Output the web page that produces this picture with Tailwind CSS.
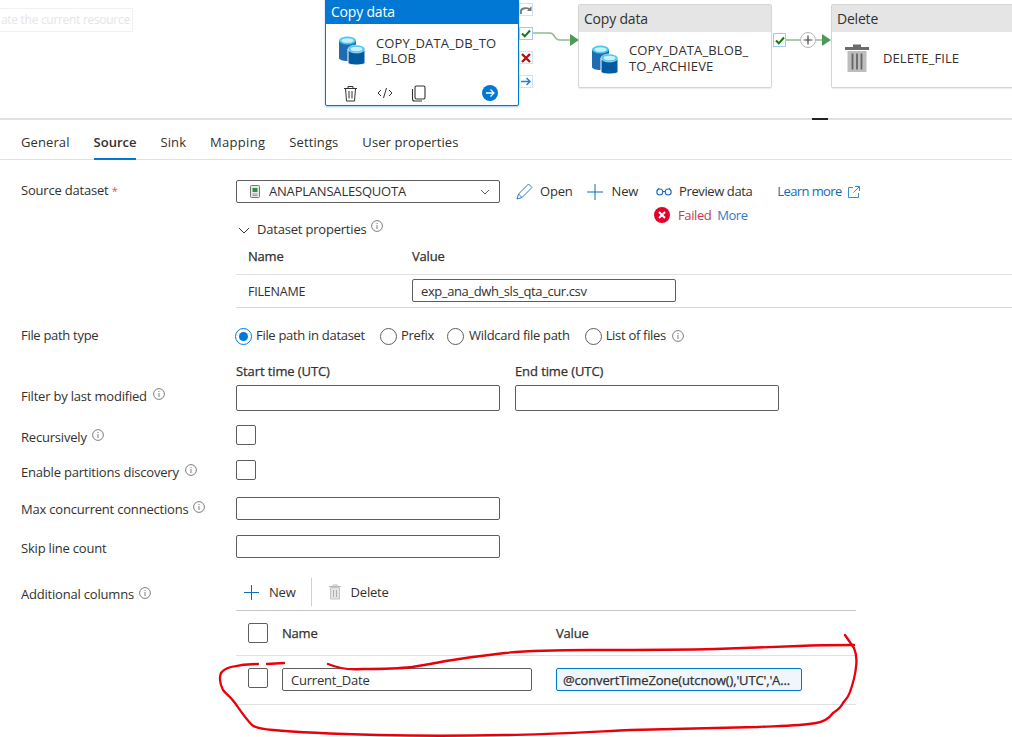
<!DOCTYPE html>
<html lang="en">
<head>
    <meta charset="UTF-8">
    <title>Copy data source</title>
    <script src="https://cdn.jsdelivr.net/npm/@tailwindcss/browser@4"></script>
</head>
<body class="bg-white font-['Open_Sans',sans-serif] text-[13px] tracking-[-0.2px] text-[#323130] overflow-hidden">

<div class="relative w-[1012px] h-[737px] overflow-hidden">

    <!-- Pipeline canvas -->
    <div class="relative h-[120px] border-b-2 border-[#e1e1e1]">
        <div class="absolute left-[-4px] top-[8px] w-[137px] h-[24px] border border-[#f2f2f2] pl-[4px] leading-[22px] text-[12px] tracking-[-0.3px] text-[#e6e6e6] whitespace-nowrap">ate the current resource</div>

        <!-- Links -->
        <svg class="absolute left-0 top-0" width="1012" height="118" fill="none">
            <path d="M533 33H550C556 33 553 40 560 40H571" stroke="#8dbd92" stroke-width="1.5"/>
            <path d="M570 34L579 40L570 46Z" fill="#4b9a57"/>
            <path d="M786 40H800M816 40H823" stroke="#8dbd92" stroke-width="1.5"/>
            <path d="M822 34L831 40L822 46Z" fill="#4b9a57"/>
            <circle cx="808" cy="40" r="7.5" fill="#fff" stroke="#b5b5b5"/>
            <path d="M803.500 40H812.500M808 35.500V44.500" stroke="#444" stroke-width="1.200"/>
        </svg>

        <!-- Node 1 -->
        <div class="absolute left-[325px] top-[-1px] w-[194px] h-[107px] bg-white border border-[#0078d4] rounded-b-[2px] shadow-[0_1px_2px_rgba(0,120,212,0.4)]">
            <div class="h-[24px] bg-[#0078d4] text-white text-[14px] leading-[23px] pl-[5px]">Copy data</div>
            <div class="flex mt-[12px] ml-[13px]">
                <svg width="26" height="29" viewBox="0 0 26 29">
                    <path d="M0 5V22C0 24 4 25 8 25S17 24 17 22V5Z" fill="#1e6db3"/>
                    <ellipse cx="8.500" cy="4.500" rx="8.500" ry="4" fill="#50c8ea"/>
                    <ellipse cx="8.500" cy="4.500" rx="6" ry="2.300" fill="#c8f0fa"/>
                    <path d="M9 13V27C9 28 13 29 17.500 29S26 28 26 27V13Z" fill="#005ba1" stroke="#fff" stroke-width="1"/>
                    <ellipse cx="17.500" cy="13" rx="8.500" ry="4" fill="#50c8ea" stroke="#fff" stroke-width="0.500"/>
                    <ellipse cx="17.500" cy="13" rx="6" ry="2.300" fill="#c8f0fa"/>
                </svg>
                <div class="ml-[11px] text-[13px] leading-[15px] tracking-[0.1px]">COPY_DATA_DB_TO<br>_BLOB</div>
            </div>
            <div class="relative flex items-center h-[20px] mt-[17px]">
                <svg class="ml-[17px]" width="15" height="17" viewBox="0 0 15 17" fill="none" stroke="#333" stroke-width="1">
                    <path d="M1 3.500H14M5 3.500V1.500H10V3.500M2.500 3.500L3.500 16H11.500L12.500 3.500M6 6V13.500M9 6V13.500"/>
                </svg>
                <svg class="ml-[19px]" width="16" height="12" viewBox="0 0 16 12" fill="none" stroke="#333" stroke-width="1">
                    <path d="M4 3L1 6L4 9M12 3L15 6L12 9M9.500 1L6.500 11"/>
                </svg>
                <svg class="ml-[18px]" width="15" height="17" viewBox="0 0 15 17" fill="none" stroke="#333" stroke-width="1.100">
                    <rect x="4" y="1" width="10" height="13" rx="1.500"/>
                    <path d="M1.500 4V14C1.500 15 2 16 3.500 16H11"/>
                </svg>
                <div class="ml-[56px] w-[16px] h-[16px] rounded-full bg-[#0078d4] flex items-center justify-center">
                    <svg width="10" height="10" viewBox="0 0 10 10" fill="none" stroke="#fff" stroke-width="1.300"><path d="M1 5H9M5.500 1.500L9 5L5.500 8.500"/></svg>
                </div>
            </div>
        </div>

        <!-- Node 1 outputs -->
        <div class="absolute left-[519px] top-[3px] flex flex-col gap-[11px]">
            <div class="w-[14px] h-[13px] bg-white border border-[#cfe3f5] flex items-center justify-center">
                <svg width="12" height="10" viewBox="0 0 12 10" fill="none" stroke="#777" stroke-width="1.800"><path d="M1 9V6C1 3 8 2 10 5"/><path d="M11.500 1V6H7Z" fill="#777" stroke="none"/></svg>
            </div>
            <div class="w-[14px] h-[13px] bg-white border border-[#9fcbee] flex items-center justify-center">
                <svg width="10" height="9" viewBox="0 0 10 9" fill="none" stroke="#107c10" stroke-width="2"><path d="M1 4.500L3.800 7.300L9 1.500"/></svg>
            </div>
            <div class="w-[14px] h-[13px] bg-white border border-[#cfe3f5] flex items-center justify-center">
                <svg width="10" height="10" viewBox="0 0 10 10" fill="none" stroke="#b00f0f" stroke-width="2.400"><path d="M1 1L9 9M9 1L1 9"/></svg>
            </div>
            <div class="w-[14px] h-[13px] bg-white border border-[#cfe3f5] flex items-center justify-center">
                <svg width="10" height="9" viewBox="0 0 10 9" fill="none" stroke="#2a7fc9" stroke-width="1.500"><path d="M0 4.500H9M5.500 1L9 4.500L5.500 8"/></svg>
            </div>
        </div>

        <!-- Node 2 -->
        <div class="absolute left-[578px] top-[4px] w-[194px] h-[84px] bg-white border border-[#d5d5d5] rounded-[2px] shadow-[0_1px_1px_rgba(0,0,0,0.08)]">
            <div class="h-[27px] bg-[#e5e5e5] text-[14px] leading-[28px] pl-[5px]">Copy data</div>
            <div class="flex mt-[13px] ml-[13px]">
                <svg width="26" height="29" viewBox="0 0 26 29">
                    <path d="M0 5V22C0 24 4 25 8 25S17 24 17 22V5Z" fill="#1e6db3"/>
                    <ellipse cx="8.500" cy="4.500" rx="8.500" ry="4" fill="#50c8ea"/>
                    <ellipse cx="8.500" cy="4.500" rx="6" ry="2.300" fill="#c8f0fa"/>
                    <path d="M9 13V27C9 28 13 29 17.500 29S26 28 26 27V13Z" fill="#005ba1" stroke="#fff" stroke-width="1"/>
                    <ellipse cx="17.500" cy="13" rx="8.500" ry="4" fill="#50c8ea" stroke="#fff" stroke-width="0.500"/>
                    <ellipse cx="17.500" cy="13" rx="6" ry="2.300" fill="#c8f0fa"/>
                </svg>
                <div class="ml-[11px] -mt-[3px] text-[13px] leading-[16px] tracking-[0.15px]">COPY_DATA_BLOB_<br>TO_ARCHIEVE</div>
            </div>
        </div>
        <div class="absolute left-[773px] top-[33px] w-[13px] h-[14px] bg-white border border-[#9fcbee] flex items-center justify-center">
            <svg width="10" height="9" viewBox="0 0 10 9" fill="none" stroke="#107c10" stroke-width="2"><path d="M1 4.500L3.800 7.300L9 1.500"/></svg>
        </div>

        <!-- Node 3 -->
        <div class="absolute left-[831px] top-[4px] w-[200px] h-[84px] bg-white border border-[#d5d5d5] rounded-[2px] shadow-[0_1px_1px_rgba(0,0,0,0.08)]">
            <div class="h-[27px] bg-[#e5e5e5] text-[14px] leading-[28px] pl-[5px]">Delete</div>
            <div class="flex items-center mt-[12px] ml-[13px]">
                <svg width="24" height="29" viewBox="0 0 24 29">
                    <path d="M0 3H24V6H0ZM8 0.500H16V3H8Z" fill="#6b6b6b"/>
                    <path d="M2.500 7H21.500V28H2.500Z" fill="#bdbdbd"/>
                    <path d="M7.500 9.500V25.500M12 9.500V25.500M16.500 9.500V25.500" stroke="#666" stroke-width="1.800"/>
                </svg>
                <div class="ml-[14px] text-[13px] tracking-[0.1px]">DELETE_FILE</div>
            </div>
        </div>

        <div class="absolute left-[812px] top-[118px] w-[16px] h-[2px] bg-[#222]"></div>
    </div>

    <!-- Tabs -->
    <div class="flex h-[40px] border-b border-[#e1e1e1] pl-[21px] gap-[24px] text-[13px] tracking-[0.1px]">
        <div class="h-[40px] leading-[44px]">General</div>
        <div class="h-[40px] leading-[44px] font-semibold tracking-normal border-b-2 border-[#0078d4]">Source</div>
        <div class="h-[40px] leading-[44px]">Sink</div>
        <div class="h-[40px] leading-[44px] tracking-[0.3px]">Mapping</div>
        <div class="h-[40px] leading-[44px]">Settings</div>
        <div class="h-[40px] leading-[44px]">User properties</div>
    </div>

    <!-- Form -->
    <div class="pl-[21px]">

        <!-- Source dataset -->
        <div class="flex mt-[20px] h-[59px]">
            <div class="w-[215px] leading-[20px]">Source dataset <span class="text-[#d9534f] text-[11px]">*</span></div>
            <div class="w-[264px]">
                <div class="flex items-center h-[23px] border border-[#605e5c] rounded-[2px] pl-[13px] pr-[9px]">
                    <svg width="10" height="13" viewBox="0 0 10 13"><rect x="0.500" y="0.500" width="9" height="12" rx="1" fill="#e8e8e8" stroke="#777"/><rect x="2.500" y="3" width="5" height="4" fill="#2f8f3f"/><path d="M2.500 9H7.500M2.500 10.500H7.500" stroke="#888" stroke-width="0.800"/></svg>
                    <span class="ml-[9px]">ANAPLANSALESQUOTA</span>
                    <svg class="ml-auto" width="10" height="6" viewBox="0 0 10 6" fill="none" stroke="#605e5c"><path d="M1 1L5 5L9 1"/></svg>
                </div>
                <div class="flex items-center h-[20px] mt-[17px] pl-[2px]">
                    <svg width="12" height="7" viewBox="0 0 12 7" fill="none" stroke="#323130"><path d="M1 1L6 6L11 1"/></svg>
                    <span class="ml-[7px]">Dataset properties</span>
                    <svg class="ml-[5px] mb-[8px]" width="12" height="12" viewBox="0 0 12 12" fill="none" stroke="#605e5c" stroke-width="0.800"><circle cx="6" cy="6" r="5.400"/><path d="M6 5V9M6 3V4"/></svg>
                </div>
            </div>
            <div class="ml-[16px]">
                <div class="flex items-center h-[23px]">
                    <svg width="17" height="17" viewBox="0 0 17 17" fill="none" stroke="#2f7cc4"><path d="M1 16L2.500 11L12.500 1L16 4.500L6 14.500ZM2.500 11L6 14.500"/></svg>
                    <span class="ml-[7px]">Open</span>
                    <svg class="ml-[14px]" width="16" height="16" viewBox="0 0 16 16" fill="none" stroke="#0f6cbd"><path d="M0 8H16M8 0V16"/></svg>
                    <span class="ml-[9px]">New</span>
                    <svg class="ml-[18px]" width="16" height="9" viewBox="0 0 16 9" fill="none" stroke="#1f6fb5" stroke-width="1.100"><circle cx="3.800" cy="5" r="3"/><circle cx="12.200" cy="5" r="3"/><path d="M6.800 4.500H9.200M1 4L3 1M15 4L13 1"/></svg>
                    <span class="ml-[7px] tracking-[-0.4px]">Preview data</span>
                    <span class="ml-[25px] tracking-[-0.6px] text-[#0f6cbd]">Learn more</span>
                    <svg class="ml-[6px]" width="12" height="12" viewBox="0 0 12 12" fill="none" stroke="#3a8bd0"><path d="M5 1.500H0.500V11.500H10.500V7M7 0.500H11.500V5M11.500 0.500L5.500 6.500"/></svg>
                </div>
                <div class="flex items-center h-[20px] ml-[138px] mt-[2px]">
                    <svg width="16" height="16" viewBox="0 0 16 16"><circle cx="8" cy="8" r="8" fill="#e3002b"/><path d="M5 5L11 11M11 5L5 11" stroke="#fff" stroke-width="2"/></svg>
                    <span class="ml-[8px] pt-[2px] tracking-[-0.4px] text-[#c8385a]">Failed</span>
                    <span class="ml-[6px] pt-[2px] tracking-[-0.5px] text-[#2f7cc4]">More</span>
                </div>
            </div>
        </div>

        <!-- Dataset properties table -->
        <div class="ml-[215px]">
            <div class="flex items-center h-[36px] border-b border-[#e1e1e1] [-webkit-text-stroke:0.25px_#323130]">
                <div class="w-[176px] pl-[12px]">Name</div>
                <div>Value</div>
            </div>
            <div class="flex h-[33px] border-b border-[#d8d8d8] pt-[4px]">
                <div class="w-[176px] pl-[12px] leading-[25px] text-[12.500px]">FILENAME</div>
                <input class="w-[264px] h-[23px] border border-[#605e5c] rounded-[2px] px-[8px] text-[13px] tracking-[-0.4px]" value="exp_ana_dwh_sls_qta_cur.csv">
            </div>
        </div>

        <!-- File path type -->
        <div class="flex items-center h-[20px] mt-[18px] tracking-[-0.3px]">
            <div class="w-[214px]">File path type</div>
            <div class="w-[17px] h-[17px] rounded-full border border-[#0078d4] flex items-center justify-center"><div class="w-[9px] h-[9px] rounded-full bg-[#0078d4]"></div></div>
            <span class="ml-[4px]">File path in dataset</span>
            <div class="ml-[15px] w-[17px] h-[17px] rounded-full border border-[#605e5c]"></div>
            <span class="ml-[4px]">Prefix</span>
            <div class="ml-[13px] w-[17px] h-[17px] rounded-full border border-[#605e5c]"></div>
            <span class="ml-[5px]">Wildcard file path</span>
            <div class="ml-[15px] w-[17px] h-[17px] rounded-full border border-[#605e5c]"></div>
            <span class="ml-[4px]">List of files</span>
            <svg class="ml-[6px]" width="12" height="12" viewBox="0 0 12 12" fill="none" stroke="#605e5c" stroke-width="0.800"><circle cx="6" cy="6" r="5.400"/><path d="M6 5V9M6 3V4"/></svg>
        </div>

        <!-- Filter by last modified -->
        <div class="flex h-[20px] mt-[16px] items-center tracking-[-0.1px] [-webkit-text-stroke:0.25px_#323130]">
            <div class="ml-[215px] w-[279px]">Start time (UTC)</div>
            <div>End time (UTC)</div>
        </div>
        <div class="flex h-[26px] mt-[3px]">
            <div class="flex items-center w-[215px] pb-[3px]">Filter by last modified
                <svg class="ml-[6px] mb-[5px]" width="12" height="12" viewBox="0 0 12 12" fill="none" stroke="#605e5c" stroke-width="0.800"><circle cx="6" cy="6" r="5.400"/><path d="M6 5V9M6 3V4"/></svg>
            </div>
            <div class="w-[264px] h-[26px] border border-[#605e5c] rounded-[2px]"></div>
            <div class="ml-[15px] w-[264px] h-[26px] border border-[#605e5c] rounded-[2px]"></div>
        </div>

        <!-- Recursively -->
        <div class="flex h-[20px] mt-[14px]">
            <div class="flex items-center w-[215px] pt-[6px]">Recursively
                <svg class="ml-[5px] mb-[6px]" width="12" height="12" viewBox="0 0 12 12" fill="none" stroke="#605e5c" stroke-width="0.800"><circle cx="6" cy="6" r="5.400"/><path d="M6 5V9M6 3V4"/></svg>
            </div>
            <div class="w-[20px] h-[20px] border border-[#605e5c] rounded-[2px]"></div>
        </div>

        <!-- Enable partitions discovery -->
        <div class="flex h-[20px] mt-[15px]">
            <div class="flex items-center w-[215px] pt-[6px]">Enable partitions discovery
                <svg class="ml-[6px] mb-[6px]" width="12" height="12" viewBox="0 0 12 12" fill="none" stroke="#605e5c" stroke-width="0.800"><circle cx="6" cy="6" r="5.400"/><path d="M6 5V9M6 3V4"/></svg>
            </div>
            <div class="w-[20px] h-[20px] border border-[#605e5c] rounded-[2px]"></div>
        </div>

        <!-- Max concurrent connections -->
        <div class="flex h-[23px] mt-[17px]">
            <div class="flex items-center w-[215px] pt-[3px]">Max concurrent connections
                <svg class="ml-[5px] mb-[6px]" width="12" height="12" viewBox="0 0 12 12" fill="none" stroke="#605e5c" stroke-width="0.800"><circle cx="6" cy="6" r="5.400"/><path d="M6 5V9M6 3V4"/></svg>
            </div>
            <div class="w-[264px] h-[23px] border border-[#605e5c] rounded-[2px]"></div>
        </div>

        <!-- Skip line count -->
        <div class="flex h-[23px] mt-[15px]">
            <div class="flex items-center w-[215px] pt-[5px]">Skip line count</div>
            <div class="w-[264px] h-[23px] border border-[#605e5c] rounded-[2px]"></div>
        </div>

        <!-- Additional columns -->
        <div class="flex mt-[20px]">
            <div class="flex items-start w-[215px] pt-[7px]">Additional columns
                <svg class="ml-[5px] mt-[2px]" width="12" height="12" viewBox="0 0 12 12" fill="none" stroke="#605e5c" stroke-width="0.800"><circle cx="6" cy="6" r="5.400"/><path d="M6 5V9M6 3V4"/></svg>
            </div>
            <div class="w-[620px]">
                <div class="flex items-center h-[28px] mb-[4px] pl-[8px]">
                    <svg width="15" height="15" viewBox="0 0 15 15" fill="none" stroke="#0f6cbd"><path d="M0 7.500H15M7.500 0V15"/></svg>
                    <span class="ml-[10px] pt-[2px]">New</span>
                    <div class="ml-[15px] w-px h-[28px] bg-[#d0d0d0]"></div>
                    <svg class="ml-[16px]" width="14" height="16" viewBox="0 0 14 16"><path d="M1 2.500H13M5 2.500V1H9V2.500" fill="none" stroke="#bbb"/><path d="M2.500 3.500H11.500V15H2.500Z" fill="#e4e4e4" stroke="#c4c4c4"/><path d="M5.500 6V13M8.500 6V13" stroke="#b0b0b0"/></svg>
                    <span class="ml-[9px] pt-[2px]">Delete</span>
                </div>
                <div class="flex items-center h-[46px] border-t border-b border-t-[#c8c8c8] border-b-[#e1e1e1] pl-[12px] [-webkit-text-stroke:0.25px_#323130]">
                    <div class="w-[20px] h-[20px] border border-[#605e5c] rounded-[2px]"></div>
                    <div class="ml-[14px] w-[274px] pt-[2px]">Name</div>
                    <div class="pt-[2px]">Value</div>
                </div>
                <div class="flex h-[49px] border-b border-[#e1e1e1] pl-[12px] pt-[12px]">
                    <div class="w-[20px] h-[20px] border border-[#605e5c] rounded-[2px]"></div>
                    <input class="ml-[14px] w-[250px] h-[23px] border border-[#605e5c] rounded-[2px] px-[8px] text-[13px]" value="Current_Date">
                    <input class="ml-[24px] w-[246px] h-[23px] border border-[#0078d4] bg-[#eff6fc] rounded-[2px] px-[6px] text-[13px] tracking-[-0.15px] [-webkit-text-stroke:0.25px_#323130]" value="@convertTimeZone(utcnow(),'UTC','A...">
                </div>
            </div>
        </div>
    </div>

    <!-- Red annotation drawn over the screenshot -->
    <svg class="absolute left-0 top-0 pointer-events-none" width="1012" height="737" fill="none" stroke="#e8000b" stroke-width="2.300" stroke-linecap="round" stroke-linejoin="round">
        <path d="M328 664C340 669 352 670 362 669C380 669 396 669 412 667C425 665 436 663 446 661C470 657 488 655 505 653C535 650 560 650 589 650C630 650 680 650 715 649C745 648 775 647 799 646C820 645 840 645 854 645"/>
        <path d="M845 635L854 648C857 655 857 660 856 667C855 678 852 686 850 692C848 698 845 700 843 703C840 709 836 711 833 713C828 720 822 722 816 723C800 726 775 726 757 727C715 728 675 729 631 730C590 732 545 735 505 735C460 736 420 736 378 735C340 734 305 733 273 730C262 729 256 728 252 725C245 718 240 710 235 703C231 697 226 694 223 690C220 684 219 678 221 673C224 669 227 668 231 667C240 665 250 664 258 664"/>
        <path d="M267 664L284 663"/>
    </svg>
</div>

</body>
</html>
